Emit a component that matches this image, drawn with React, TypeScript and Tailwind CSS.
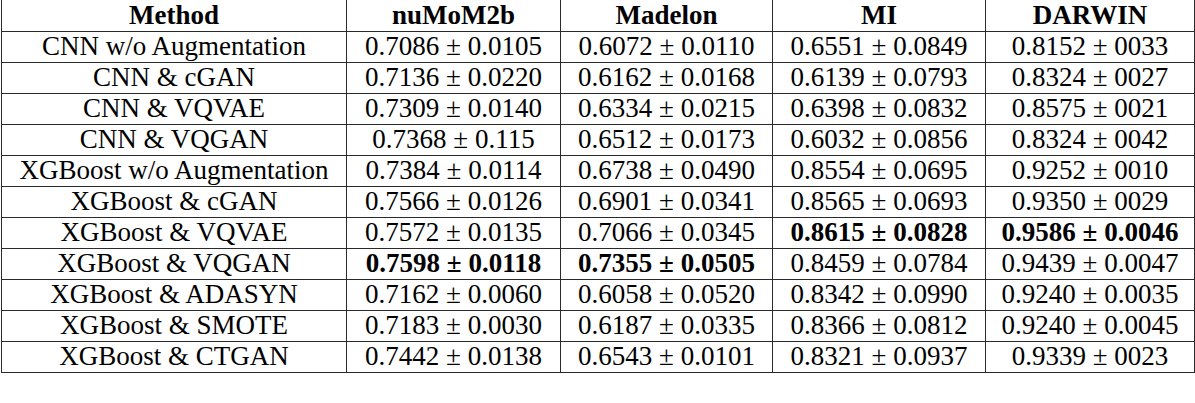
import React from "react";

type Row = {
  method: string;
  cells: string[];
  bold?: number[]; // indexes of cells in bold
};

const rows: Row[] = [
  { method: "CNN w/o Augmentation", cells: ["0.7086 ± 0.0105", "0.6072 ± 0.0110", "0.6551 ± 0.0849", "0.8152 ± 0033"] },
  { method: "CNN & cGAN", cells: ["0.7136 ± 0.0220", "0.6162 ± 0.0168", "0.6139 ± 0.0793", "0.8324 ± 0027"] },
  { method: "CNN & VQVAE", cells: ["0.7309 ± 0.0140", "0.6334 ± 0.0215", "0.6398 ± 0.0832", "0.8575 ± 0021"] },
  { method: "CNN & VQGAN", cells: ["0.7368 ± 0.115", "0.6512 ± 0.0173", "0.6032 ± 0.0856", "0.8324 ± 0042"] },
  { method: "XGBoost w/o Augmentation", cells: ["0.7384 ± 0.0114", "0.6738 ± 0.0490", "0.8554 ± 0.0695", "0.9252 ± 0010"] },
  { method: "XGBoost & cGAN", cells: ["0.7566 ± 0.0126", "0.6901 ± 0.0341", "0.8565 ± 0.0693", "0.9350 ± 0029"] },
  { method: "XGBoost & VQVAE", cells: ["0.7572 ± 0.0135", "0.7066 ± 0.0345", "0.8615 ± 0.0828", "0.9586 ± 0.0046"], bold: [2, 3] },
  { method: "XGBoost & VQGAN", cells: ["0.7598 ± 0.0118", "0.7355 ± 0.0505", "0.8459 ± 0.0784", "0.9439 ± 0.0047"], bold: [0, 1] },
  { method: "XGBoost & ADASYN", cells: ["0.7162 ± 0.0060", "0.6058 ± 0.0520", "0.8342 ± 0.0990", "0.9240 ± 0.0035"] },
  { method: "XGBoost & SMOTE", cells: ["0.7183 ± 0.0030", "0.6187 ± 0.0335", "0.8366 ± 0.0812", "0.9240 ± 0.0045"] },
  { method: "XGBoost & CTGAN", cells: ["0.7442 ± 0.0138", "0.6543 ± 0.0101", "0.8321 ± 0.0937", "0.9339 ± 0023"] },
];

const headers = ["Method", "nuMoM2b", "Madelon", "MI", "DARWIN"];

export default function App() {
  return (
    <div className="w-[1195px] h-[403px] bg-white overflow-hidden font-[family-name:'Liberation_Serif','Times_New_Roman',serif] text-black">
      <table className="ml-px w-[1193px] table-fixed border-collapse text-[27px]">
        <colgroup>
          <col className="w-[345px]" />
          <col className="w-[214px]" />
          <col className="w-[212px]" />
          <col className="w-[213px]" />
          <col className="w-[209px]" />
        </colgroup>
        <thead>
          <tr className="h-[31px]">
            {headers.map((h) => (
              <th
                key={h}
                className="border-x border-b border-[#2a2a2a] p-0 text-center font-bold leading-[29px] whitespace-nowrap"
              >
                {h}
              </th>
            ))}
          </tr>
        </thead>
        <tbody>
          {rows.map((r) => (
            <tr key={r.method} className="h-[31px]">
              <td className="border border-[#2a2a2a] p-0 text-center leading-[29px] whitespace-nowrap">
                {r.method}
              </td>
              {r.cells.map((c, i) => (
                <td
                  key={i}
                  className={
                    r.bold?.includes(i)
                      ? "border border-[#2a2a2a] p-0 text-center leading-[29px] whitespace-nowrap font-bold"
                      : "border border-[#2a2a2a] p-0 text-center leading-[29px] whitespace-nowrap"
                  }
                >
                  {c}
                </td>
              ))}
            </tr>
          ))}
        </tbody>
      </table>
    </div>
  );
}
